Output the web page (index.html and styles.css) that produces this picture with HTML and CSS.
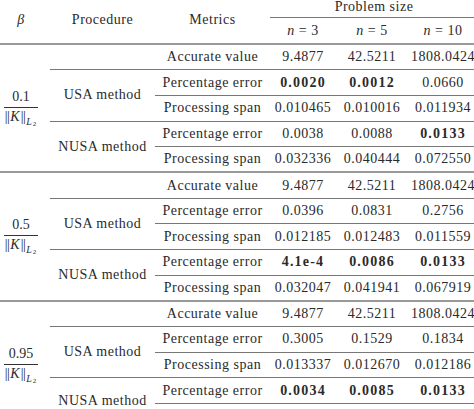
FILE: index.html
```html
<!DOCTYPE html>
<html lang="en">
<head>
    <meta charset="UTF-8">
    <title>Problem size results</title>
    <link rel="stylesheet" href="styles.css">
</head>
<body>
    <table class="res">
        <colgroup>
            <col class="c-beta"><col class="c-proc"><col class="c-metric">
            <col class="c-n3"><col class="c-n5"><col class="c-n10">
        </colgroup>
        <thead>
            <tr class="h1">
                <th rowspan="2"><i>β</i></th>
                <th rowspan="2">Procedure</th>
                <th rowspan="2">Metrics</th>
                <th colspan="3" class="ps">Problem size</th>
            </tr>
            <tr class="h2">
                <th><i>n</i> = 3</th>
                <th><i>n</i> = 5</th>
                <th><i>n</i> = 10</th>
            </tr>
        </thead>

        <!-- beta = 0.1 -->
        <tbody>
            <tr class="top">
                <td rowspan="5"><span class="frac"><span class="num">0.1</span><span class="den"><span class="bars">||</span><i>K</i><span class="bars">||</span><sub><i>L</i><sub>2</sub></sub></span></span></td>
                <td></td>
                <td>Accurate value</td>
                <td>9.4877</td><td>42.5211</td><td>1808.0424</td>
            </tr>
            <tr class="mid">
                <td rowspan="2">USA method</td>
                <td>Percentage error</td>
                <td class="b">0.0020</td><td class="b">0.0012</td><td>0.0660</td>
            </tr>
            <tr class="sep">
                <td>Processing span</td>
                <td>0.010465</td><td>0.010016</td><td>0.011934</td>
            </tr>
            <tr class="mid">
                <td rowspan="2">NUSA method</td>
                <td>Percentage error</td>
                <td>0.0038</td><td>0.0088</td><td class="b">0.0133</td>
            </tr>
            <tr class="sep">
                <td>Processing span</td>
                <td>0.032336</td><td>0.040444</td><td>0.072550</td>
            </tr>
        </tbody>

        <!-- beta = 0.5 -->
        <tbody>
            <tr class="top">
                <td rowspan="5"><span class="frac"><span class="num">0.5</span><span class="den"><span class="bars">||</span><i>K</i><span class="bars">||</span><sub><i>L</i><sub>2</sub></sub></span></span></td>
                <td></td>
                <td>Accurate value</td>
                <td>9.4877</td><td>42.5211</td><td>1808.0424</td>
            </tr>
            <tr class="mid">
                <td rowspan="2">USA method</td>
                <td>Percentage error</td>
                <td>0.0396</td><td>0.0831</td><td>0.2756</td>
            </tr>
            <tr class="sep">
                <td>Processing span</td>
                <td>0.012185</td><td>0.012483</td><td>0.011559</td>
            </tr>
            <tr class="mid">
                <td rowspan="2">NUSA method</td>
                <td>Percentage error</td>
                <td class="b">4.1e-4</td><td class="b">0.0086</td><td class="b">0.0133</td>
            </tr>
            <tr class="sep">
                <td>Processing span</td>
                <td>0.032047</td><td>0.041941</td><td>0.067919</td>
            </tr>
        </tbody>

        <!-- beta = 0.95 -->
        <tbody>
            <tr class="top">
                <td rowspan="5"><span class="frac"><span class="num">0.95</span><span class="den"><span class="bars">||</span><i>K</i><span class="bars">||</span><sub><i>L</i><sub>2</sub></sub></span></span></td>
                <td></td>
                <td>Accurate value</td>
                <td>9.4877</td><td>42.5211</td><td>1808.0424</td>
            </tr>
            <tr class="mid">
                <td rowspan="2">USA method</td>
                <td>Percentage error</td>
                <td>0.3005</td><td>0.1529</td><td>0.1834</td>
            </tr>
            <tr class="sep">
                <td>Processing span</td>
                <td>0.013337</td><td>0.012670</td><td>0.012186</td>
            </tr>
            <tr class="mid">
                <td rowspan="2" class="last">NUSA method</td>
                <td>Percentage error</td>
                <td class="b">0.0034</td><td class="b">0.0085</td><td class="b">0.0133</td>
            </tr>
            <tr class="sep">
                <td></td>
                <td></td><td></td><td></td>
            </tr>
        </tbody>
    </table>
</body>
</html>
```

FILE: styles.css
```css
html, body {
    margin: 0;
    background: #fff;
    overflow: hidden;
}
.res {
    margin: -3px 0 0 -8px;
    border-collapse: collapse;
    table-layout: fixed;
    width: 486px;
    font-family: "Liberation Serif", "DejaVu Serif", serif;
    font-size: 14px;
    letter-spacing: 0.5px;
    color: #2a2a2a;
}
.c-beta { width: 58px; }
.c-proc { width: 105px; }
.c-metric { width: 115px; }
.c-n3 { width: 66px; }
.c-n5 { width: 72px; }
.c-n10 { width: 70px; }

.res th, .res td {
    padding: 0;
    text-align: center;
    vertical-align: middle;
    font-weight: normal;
    white-space: nowrap;
}
.h1 th { height: 20px; }
.h2 th { height: 25px; }
.ps { border-bottom: 1px solid #777; }

.res tbody tr { height: 25.7px; }
.top td { border-top: 2px solid #999; }
.sep td { border-top: 1px solid #777; }
.mid td { border-top: 1px solid #777; }
.res .b {
    font-weight: bold;
    letter-spacing: 1.2px;
}
.res .last {
    vertical-align: top;
    padding-top: 15px;
}

/* fraction in beta column */
.frac {
    display: inline-flex;
    flex-direction: column;
    align-items: center;
    line-height: 1;
    letter-spacing: 0;
}
.num {
    padding: 0 0 3px;
    font-size: 14px;
}
.den {
    border-top: 1px solid #333;
    padding: 2px 2px 0 1px;
    font-size: 14px;
}
.bars {
    letter-spacing: -0.5px;
}
.den i {
    padding: 0 1px;
}
.den sub {
    font-size: 10px;
    vertical-align: -4px;
}
.den sub sub {
    font-size: 7px;
    vertical-align: -1px;
}
```
